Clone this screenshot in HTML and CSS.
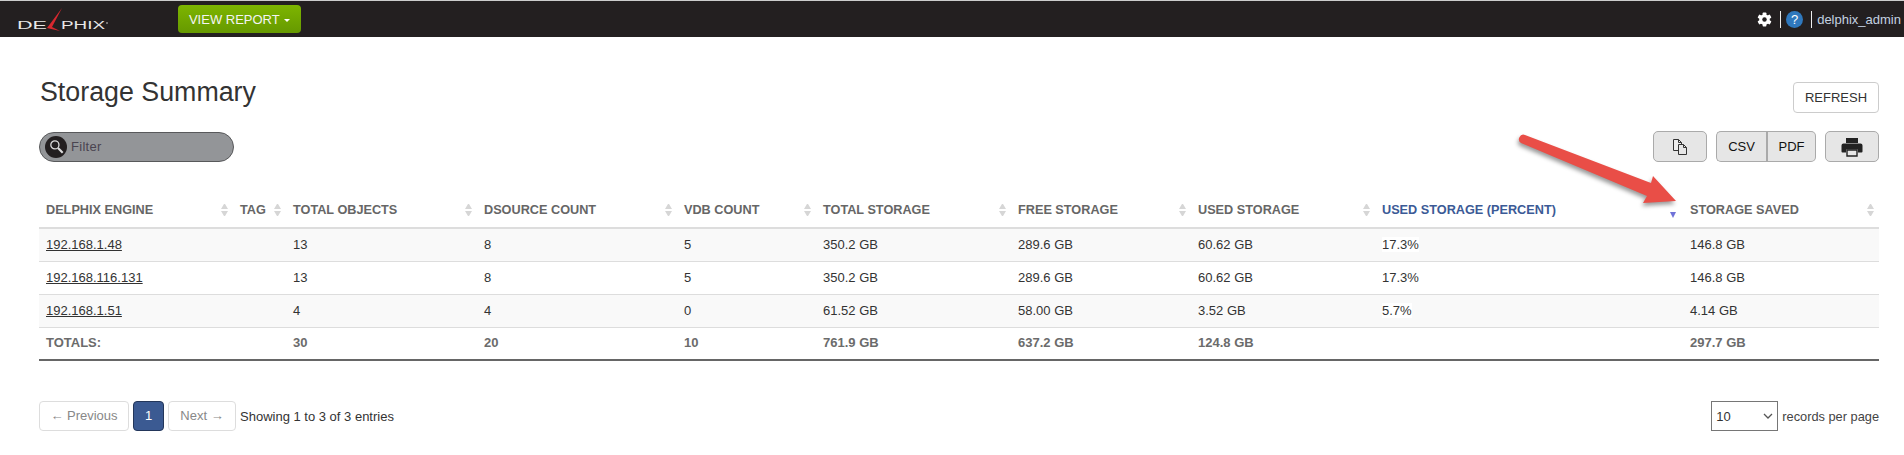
FILE: index.html
```html
<!DOCTYPE html>
<html lang="en">
<head>
    <meta charset="UTF-8">
    <meta name="viewport" content="width=device-width, initial-scale=1.0">
    <title>Storage Summary</title>
    <link rel="stylesheet" href="styles.css">
</head>
<body>
    <nav class="navbar">
        <svg class="logo" width="110" height="30" viewBox="0 0 110 30">
            <text class="logo-text" x="17" y="24.5" textLength="30" lengthAdjust="spacingAndGlyphs">DE</text>
            <polygon points="62,4 47,24 60,27 52,23" fill="#d8282f"/>
            <text class="logo-text" x="61" y="24.5" textLength="44" lengthAdjust="spacingAndGlyphs">PHIX</text>
            <circle cx="107" cy="19" r="0.8" fill="#ddd"/>
        </svg>
        <button class="report-btn">VIEW REPORT <span class="caret"></span></button>
        <div class="nav-right">
            <svg class="gear" width="15" height="15" viewBox="0 0 16 16">
                <g fill="#fff">
                    <rect x="6" y="0.5" width="4" height="15" rx="0.8"/>
                    <rect x="6" y="0.5" width="4" height="15" rx="0.8" transform="rotate(60 8 8)"/>
                    <rect x="6" y="0.5" width="4" height="15" rx="0.8" transform="rotate(120 8 8)"/>
                    <circle cx="8" cy="8" r="5.6"/>
                </g>
                <circle cx="8" cy="8" r="2.4" fill="#231f20"/>
            </svg>
            <span class="nav-sep"></span>
            <span class="help">?</span>
            <span class="nav-sep"></span>
            <span class="user">delphix_admin</span>
        </div>
    </nav>

    <main class="page">
        <div class="title-row">
            <h1>Storage Summary</h1>
            <button class="refresh">REFRESH</button>
        </div>

        <div class="toolbar">
            <div class="filter">
                <span class="filter-icon">
                    <svg width="15" height="15" viewBox="0 0 14 14">
                        <circle cx="5.5" cy="5.5" r="3.8" fill="none" stroke="#ddd" stroke-width="1.2"/>
                        <line x1="8.4" y1="8.4" x2="12.8" y2="12.8" stroke="#ddd" stroke-width="2"/>
                    </svg>
                </span>
                <span class="filter-label">Filter</span>
            </div>
            <div class="tools">
                <button class="tool tool-icon">
                    <svg width="18" height="18" viewBox="0 0 18 18" fill="none" stroke="#333" stroke-width="1">
                        <path d="M2.5 1.5h5l3 3v8h-8z" fill="#eee"/>
                        <path d="M7.5 1.5v3h3"/>
                        <path d="M7.5 6.5h5l3 3v7h-8z" fill="#e6e6e6"/>
                        <path d="M12.5 6.5v3h3"/>
                    </svg>
                </button>
                <div class="tool-group">
                    <button class="tool tool-text">CSV</button>
                    <button class="tool tool-text">PDF</button>
                </div>
                <button class="tool tool-icon">
                    <svg width="22" height="20" viewBox="0 0 22 20">
                        <path d="M5 1h12v5H5z" fill="#222"/>
                        <path d="M2.5 6.5h17a2 2 0 0 1 2 2v6a1 1 0 0 1-1 1H17v-3H5v3H1.5a1 1 0 0 1-1-1v-6a2 2 0 0 1 2-2z" fill="#222"/>
                        <path d="M6 13h10v6H6z" fill="#e6e6e6" stroke="#222" stroke-width="1.4"/>
                    </svg>
                </button>
            </div>
        </div>

        <table class="summary">
            <colgroup>
                <col class="c-engine"><col class="c-tag"><col class="c-objects"><col class="c-dsource"><col class="c-vdb">
                <col class="c-total"><col class="c-free"><col class="c-used"><col class="c-pct"><col class="c-saved">
            </colgroup>
            <thead>
                <tr>
                    <th><div class="th-in">DELPHIX ENGINE<span class="sort"></span></div></th>
                    <th><div class="th-in">TAG<span class="sort"></span></div></th>
                    <th><div class="th-in">TOTAL OBJECTS<span class="sort"></span></div></th>
                    <th><div class="th-in">DSOURCE COUNT<span class="sort"></span></div></th>
                    <th><div class="th-in">VDB COUNT<span class="sort"></span></div></th>
                    <th><div class="th-in">TOTAL STORAGE<span class="sort"></span></div></th>
                    <th><div class="th-in">FREE STORAGE<span class="sort"></span></div></th>
                    <th><div class="th-in">USED STORAGE<span class="sort"></span></div></th>
                    <th class="sorted"><div class="th-in">USED STORAGE (PERCENT)<span class="sort-desc"></span></div></th>
                    <th><div class="th-in">STORAGE SAVED<span class="sort"></span></div></th>
                </tr>
            </thead>
            <tbody>
                <tr>
                    <td><a href="#">192.168.1.48</a></td><td></td><td>13</td><td>8</td><td>5</td>
                    <td>350.2 GB</td><td>289.6 GB</td><td>60.62 GB</td><td><span class="pct">17.3%</span></td><td>146.8 GB</td>
                </tr>
                <tr>
                    <td><a href="#">192.168.116.131</a></td><td></td><td>13</td><td>8</td><td>5</td>
                    <td>350.2 GB</td><td>289.6 GB</td><td>60.62 GB</td><td><span class="pct">17.3%</span></td><td>146.8 GB</td>
                </tr>
                <tr>
                    <td><a href="#">192.168.1.51</a></td><td></td><td>4</td><td>4</td><td>0</td>
                    <td>61.52 GB</td><td>58.00 GB</td><td>3.52 GB</td><td><span class="pct">5.7%</span></td><td>4.14 GB</td>
                </tr>
            </tbody>
            <tfoot>
                <tr>
                    <td>TOTALS:</td><td></td><td>30</td><td>20</td><td>10</td>
                    <td>761.9 GB</td><td>637.2 GB</td><td>124.8 GB</td><td></td><td>297.7 GB</td>
                </tr>
            </tfoot>
        </table>

        <div class="table-foot">
            <div class="pager">
                <span class="page-btn prev">&larr; Previous</span>
                <span class="page-btn current">1</span>
                <span class="page-btn next">Next &rarr;</span>
                <span class="info">Showing 1 to 3 of 3 entries</span>
            </div>
            <div class="per-page">
                <span class="select">10
                    <svg width="10" height="6" viewBox="0 0 10 6" fill="none" stroke="#555" stroke-width="1.3"><path d="M1 1l4 4 4-4"/></svg>
                </span>
                <span class="per-page-label">records per page</span>
            </div>
        </div>
    </main>

    <!-- annotation arrow drawn over the page -->
    <svg class="arrow" width="180" height="90" viewBox="0 0 180 90">
        <path d="M22 7 L148 55 L150 48 L173 73 L140 75 L144 68 L18 15 A4.5 4.5 0 0 1 22 7 Z" fill="#e94e47"/>
    </svg>
</body>
</html>
```

FILE: styles.css
```css
body {
    margin: 0;
    font-family: "Liberation Sans", Arial, sans-serif;
    font-size: 13px;
    color: #333;
    background-color: #fff;
}
button {
    font-family: inherit;
}

/* top bar */
.navbar {
    display: flex;
    align-items: center;
    height: 36px;
    background-color: #231f20;
    border-top: 1px solid #ccc;
}
.logo {
    display: block;
    flex: none;
    margin-right: 68px;
}
.logo-text {
    font-family: "Liberation Sans", Arial, sans-serif;
    font-size: 10px;
    fill: #e8e8e8;
}
.report-btn {
    width: 123px;
    height: 28px;
    padding: 0;
    border: 0;
    border-radius: 4px;
    background: linear-gradient(#7db500, #669900);
    color: #f4f4f4;
    font-size: 13px;
}
.caret {
    display: inline-block;
    margin-left: 1px;
    vertical-align: middle;
    border-top: 3.5px solid #fff;
    border-left: 3.5px solid transparent;
    border-right: 3.5px solid transparent;
}
.nav-right {
    display: flex;
    align-items: center;
    gap: 5px;
    margin-left: auto;
    padding-right: 3px;
}
.nav-sep {
    width: 1px;
    height: 17px;
    background-color: #eee;
}
.gear {
    display: block;
    margin-right: 3px;
}
.help {
    width: 17px;
    height: 17px;
    margin-right: 3px;
    border-radius: 50%;
    background-color: #2f78bd;
    color: #fff;
    font-size: 13px;
    line-height: 17px;
    text-align: center;
}
.user {
    color: #c3d2e0;
    font-size: 13px;
}

/* page header */
.page {
    padding: 0 25px 0 39px;
}
.title-row {
    display: flex;
    justify-content: space-between;
    align-items: flex-start;
    margin-top: 38px;
}
h1 {
    margin: 2px 0 0 1px;
    font-size: 26.8px;
    font-weight: normal;
    line-height: 31px;
    color: #333;
}
.refresh {
    width: 86px;
    height: 31px;
    margin-top: 7px;
    padding: 0;
    background-color: #fff;
    border: 1px solid #ccc;
    border-radius: 4px;
    color: #333;
    font-size: 13px;
}
.toolbar {
    display: flex;
    justify-content: space-between;
    align-items: center;
    margin-top: 18px;
}
.filter {
    display: flex;
    align-items: center;
    box-sizing: border-box;
    width: 195px;
    height: 30px;
    padding-left: 5px;
    background-color: #939598;
    border: 1px solid #58595b;
    border-radius: 15px;
}
.filter-icon {
    display: flex;
    align-items: center;
    justify-content: center;
    width: 22px;
    height: 22px;
    border-radius: 50%;
    background-color: #231f20;
}
.filter-label {
    margin-left: 4px;
    color: #4a4450;
    font-size: 13px;
    letter-spacing: 0.3px;
}
.tools {
    display: flex;
    gap: 9px;
}
.tool {
    height: 31px;
    padding: 0;
    background-color: #e6e6e6;
    border: 1px solid #aaa;
    border-radius: 5px;
    color: #111;
    font-size: 13px;
}
.tool-icon {
    display: flex;
    align-items: center;
    justify-content: center;
    width: 54px;
}
.tool-group {
    display: flex;
}
.tool-text {
    width: 50px;
}
.tool-group .tool:first-child {
    border-right: 0;
    border-radius: 5px 0 0 5px;
}
.tool-group .tool:last-child {
    border-left: 2px solid #aaa;
    border-radius: 0 5px 5px 0;
}

/* table */
.summary {
    width: 1840px;
    margin-top: 31px;
    border-collapse: collapse;
    table-layout: fixed;
}
.c-engine { width: 194px; }
.c-tag { width: 53px; }
.c-objects { width: 191px; }
.c-dsource { width: 200px; }
.c-vdb { width: 139px; }
.c-total { width: 195px; }
.c-free { width: 180px; }
.c-used { width: 184px; }
.c-pct { width: 308px; }
.c-saved { width: 196px; }
th {
    height: 34px;
    padding: 0 5px 0 7px;
    border-bottom: 2px solid #ddd;
    color: #666;
    font-size: 12.7px;
    font-weight: bold;
    text-align: left;
}
.th-in {
    display: flex;
    justify-content: space-between;
    align-items: center;
}
th.sorted {
    color: #3b5a96;
}
.sort {
    display: block;
    flex: none;
    width: 7px;
}
.sort::before, .sort::after {
    content: "";
    display: block;
    border-left: 3.5px solid transparent;
    border-right: 3.5px solid transparent;
}
.sort::before {
    margin-bottom: 2px;
    border-bottom: 5px solid #d6d6d6;
}
.sort::after {
    border-top: 5px solid #d6d6d6;
}
.sort-desc {
    flex: none;
    margin: 10px 2px 0 0;
    border-top: 6px solid #6f72d8;
    border-left: 3.5px solid transparent;
    border-right: 3.5px solid transparent;
}
td {
    height: 30px;
    padding: 0 7px 2px;
    border-bottom: 1px solid #ddd;
    color: #333;
    font-size: 13px;
}
tbody tr:nth-child(odd) td {
    background-color: #f9f9f9;
}
td a {
    color: #333;
}
.pct {
    background-color: #fff;
}
tfoot td {
    height: 29px;
    border-bottom: 2px solid #666;
    color: #6b6b6b;
    font-weight: bold;
}

/* below the table */
.table-foot {
    display: flex;
    justify-content: space-between;
    align-items: center;
    margin-top: 40px;
}
.pager {
    display: flex;
    align-items: center;
    gap: 4px;
}
.page-btn {
    box-sizing: border-box;
    height: 30px;
    background-color: #fff;
    border: 1px solid #ddd;
    border-radius: 4px;
    color: #888;
    font-size: 13px;
    line-height: 28px;
    text-align: center;
}
.prev {
    width: 90px;
}
.next {
    width: 68px;
}
.page-btn.current {
    width: 31px;
    background-color: #3b5a92;
    border-color: #23365a;
    color: #fff;
}
.info {
    color: #333;
}
.per-page {
    display: flex;
    align-items: center;
    gap: 4px;
    color: #444;
}
.per-page-label {
    font-size: 12.8px;
}
.select {
    display: flex;
    align-items: center;
    justify-content: space-between;
    box-sizing: border-box;
    width: 67px;
    height: 30px;
    padding: 0 4px;
    border: 1px solid #767676;
    font-size: 13px;
    color: #333;
}

.arrow {
    position: absolute;
    left: 1503px;
    top: 128px;
    overflow: visible;
    filter: drop-shadow(-1px 3px 2px rgba(0, 0, 0, 0.4));
}
```
